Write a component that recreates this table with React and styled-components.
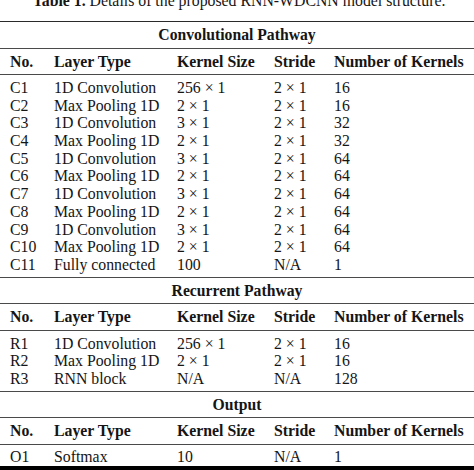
import React from 'react';
import styled, { createGlobalStyle } from 'styled-components';

const GlobalStyle = createGlobalStyle`
  html, body {
    margin: 0;
    padding: 0;
    background: #ffffff;
  }
  body {
    font-family: "Liberation Serif", "Times New Roman", serif;
    color: #151515;
  }
`;

const Page = styled.div`
  width: 474px;
  height: 470px;
  overflow: hidden;
  background: #fff;
`;

const Caption = styled.div`
  margin-top: -8px;
  height: 29px;
  font-size: 15.8px;
  line-height: 18px;
  text-align: center;
  padding-left: 4px;
  box-sizing: border-box;
`;

const Table = styled.div`
  border-top: 1.4px solid #2a2a2a;
`;

const SectionTitle = styled.div`
  height: 25.5px;
  line-height: 25px;
  text-align: center;
  font-weight: bold;
  font-size: 15.7px;
  border-bottom: 1.2px solid #4a4a4a;
`;

const Row = styled.div`
  display: grid;
  grid-template-columns: 44px 123px 97px 60px 1fr;
  padding-left: 10px;
  font-size: 15.8px;
  height: ${p => (p.$head ? '25.5px' : '17.7px')};
  line-height: ${p => (p.$head ? '25px' : '17.7px')};
  font-weight: ${p => (p.$head ? 'bold' : 'normal')};
  border-bottom: ${p => (p.$head ? '1.2px solid #4a4a4a' : 'none')};
  white-space: nowrap;
`;

const Body = styled.div`
  padding: ${p => p.$pad || '4px 0 3px'};
  border-bottom: ${p => (p.$last ? '4px solid #000' : '1.2px solid #4a4a4a')};
`;

const head = ['No.', 'Layer Type', 'Kernel Size', 'Stride', 'Number of Kernels'];

const sections = [
  {
    title: 'Convolutional Pathway',
    rows: [
      ['C1', '1D Convolution', '256 × 1', '2 × 1', '16'],
      ['C2', 'Max Pooling 1D', '2 × 1', '2 × 1', '16'],
      ['C3', '1D Convolution', '3 × 1', '2 × 1', '32'],
      ['C4', 'Max Pooling 1D', '2 × 1', '2 × 1', '32'],
      ['C5', '1D Convolution', '3 × 1', '2 × 1', '64'],
      ['C6', 'Max Pooling 1D', '2 × 1', '2 × 1', '64'],
      ['C7', '1D Convolution', '3 × 1', '2 × 1', '64'],
      ['C8', 'Max Pooling 1D', '2 × 1', '2 × 1', '64'],
      ['C9', '1D Convolution', '3 × 1', '2 × 1', '64'],
      ['C10', 'Max Pooling 1D', '2 × 1', '2 × 1', '64'],
      ['C11', 'Fully connected', '100', 'N/A', '1'],
    ],
  },
  {
    title: 'Recurrent Pathway',
    rows: [
      ['R1', '1D Convolution', '256 × 1', '2 × 1', '16'],
      ['R2', 'Max Pooling 1D', '2 × 1', '2 × 1', '16'],
      ['R3', 'RNN block', 'N/A', 'N/A', '128'],
    ],
  },
  {
    title: 'Output',
    rows: [['O1', 'Softmax', '10', 'N/A', '1']],
  },
];

export default function App() {
  return (
    <Page>
      <GlobalStyle />
      <Caption>
        <b>Table 1.</b> Details of the proposed RNN-WDCNN model structure.
      </Caption>
      <Table>
        {sections.map((s, i) => (
          <div key={s.title}>
            <SectionTitle>{s.title}</SectionTitle>
            <Row $head>
              {head.map(h => <span key={h}>{h}</span>)}
            </Row>
            <Body $last={i === sections.length - 1} $pad={i === sections.length - 1 ? '3px 0 1px' : undefined}>
              {s.rows.map(r => (
                <Row key={r[0]}>
                  {r.map((c, j) => <span key={j}>{c}</span>)}
                </Row>
              ))}
            </Body>
          </div>
        ))}
      </Table>
    </Page>
  );
}
